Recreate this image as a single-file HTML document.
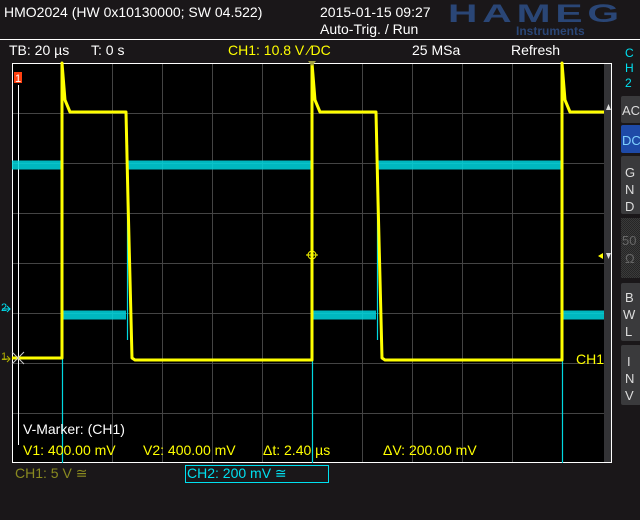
<!DOCTYPE html>
<html><head><meta charset="utf-8"><style>
html,body{margin:0;padding:0;background:#1a1719;width:640px;height:520px;overflow:hidden}
svg{display:block}
text{font-family:"Liberation Sans",sans-serif}
</style></head><body>
<svg width="640" height="520" viewBox="0 0 640 520" xmlns="http://www.w3.org/2000/svg">
<defs>
<pattern id="hatch" width="2" height="2" patternUnits="userSpaceOnUse"><rect width="2" height="2" fill="#3a3a3a"/><rect width="1" height="1" fill="#262626"/><rect x="1" y="1" width="1" height="1" fill="#262626"/></pattern>
</defs>
<rect width="640" height="520" fill="#1a1719"/>
<text x="4" y="17" font-size="14" fill="#fff">HMO2024 (HW 0x10130000; SW 04.522)</text>
<text x="320" y="17" font-size="14" fill="#fff">2015-01-15 09:27</text>
<text x="320" y="34" font-size="14" fill="#fff">Auto-Trig. / Run</text>
<text x="448" y="22" font-size="25" font-weight="bold" fill="#2a4676" letter-spacing="3" textLength="176" lengthAdjust="spacingAndGlyphs">HAMEG</text>
<text x="516" y="35" font-size="12" font-weight="bold" fill="#2a4676">Instruments</text>
<line x1="0" y1="39.5" x2="640" y2="39.5" stroke="#fff" stroke-width="1"/>
<text x="9" y="55" font-size="14" fill="#fff">TB: 20 µs</text>
<text x="91" y="55" font-size="14" fill="#fff">T: 0 s</text>
<text x="228" y="55" font-size="14" fill="#ffff00">CH1: 10.8 V ⁄DC</text>
<text x="412" y="55" font-size="14" fill="#fff">25 MSa</text>
<text x="511" y="55" font-size="14" fill="#fff">Refresh</text>
<text x="625" y="57" font-size="12" fill="#00e0f0">C</text>
<text x="625" y="72" font-size="12" fill="#00e0f0">H</text>
<text x="625" y="87" font-size="12" fill="#00e0f0">2</text>
<rect x="621" y="96" width="20" height="27" rx="2" fill="#3a3a3c"/>
<text x="622" y="115" font-size="13" fill="#ddd">AC</text>
<rect x="621" y="125" width="20" height="28" rx="2" fill="#1e4aa8"/>
<text x="622" y="145" font-size="13" fill="#7fd0ff">DC</text>
<rect x="621" y="156" width="20" height="58" rx="2" fill="#3a3a3c"/>
<text x="625" y="177" font-size="13" fill="#ddd">G</text><text x="625" y="194" font-size="13" fill="#ddd">N</text><text x="625" y="211" font-size="13" fill="#ddd">D</text>
<rect x="621" y="218" width="20" height="60" fill="url(#hatch)"/>
<text x="622" y="245" font-size="13" fill="#666">50</text>
<text x="625" y="263" font-size="13" fill="#666">Ω</text>
<rect x="621" y="283" width="20" height="58" rx="2" fill="#3a3a3c"/>
<text x="625" y="302" font-size="13" fill="#ddd">B</text><text x="623" y="319" font-size="13" fill="#ddd">W</text><text x="625" y="336" font-size="13" fill="#ddd">L</text>
<rect x="621" y="345" width="20" height="60" rx="2" fill="#3a3a3c"/>
<text x="627" y="366" font-size="13" fill="#ddd">I</text><text x="625" y="383" font-size="13" fill="#ddd">N</text><text x="625" y="400" font-size="13" fill="#ddd">V</text>
<rect x="12" y="63" width="600" height="400" fill="#000"/>
<rect x="604" y="63" width="8" height="400" fill="#333336"/>
<g stroke="#444" stroke-width="1">
<line x1="62.5" y1="63" x2="62.5" y2="463"/><line x1="112.5" y1="63" x2="112.5" y2="463"/><line x1="162.5" y1="63" x2="162.5" y2="463"/><line x1="212.5" y1="63" x2="212.5" y2="463"/><line x1="262.5" y1="63" x2="262.5" y2="463"/><line x1="312.5" y1="63" x2="312.5" y2="463"/><line x1="362.5" y1="63" x2="362.5" y2="463"/><line x1="412.5" y1="63" x2="412.5" y2="463"/><line x1="462.5" y1="63" x2="462.5" y2="463"/><line x1="512.5" y1="63" x2="512.5" y2="463"/><line x1="562.5" y1="63" x2="562.5" y2="463"/>
<line x1="12" y1="113.5" x2="604" y2="113.5"/><line x1="12" y1="163.5" x2="604" y2="163.5"/><line x1="12" y1="213.5" x2="604" y2="213.5"/><line x1="12" y1="263.5" x2="604" y2="263.5"/><line x1="12" y1="313.5" x2="604" y2="313.5"/><line x1="12" y1="363.5" x2="604" y2="363.5"/><line x1="12" y1="413.5" x2="604" y2="413.5"/>
</g>
<rect x="12.5" y="63.5" width="599" height="399" fill="none" stroke="#fff" stroke-width="1"/>
<line x1="12.5" y1="80" x2="12.5" y2="463" stroke="#fff" stroke-dasharray="2 2"/>
<line x1="18.5" y1="85" x2="18.5" y2="445" stroke="#fff"/>
<rect x="14" y="72" width="8" height="11" fill="#ff4010"/><text x="15" y="82" font-size="11" fill="#fff">1</text>
<!-- cyan trace -->
<g fill="none" stroke="#00d8e0">
<path d="M12 165 H62 M127 165 H312 M377 165 H562" stroke-width="9" opacity="0.85"/>
<path d="M63 315 H126 M313 315 H376 M563 315 H604" stroke-width="9" opacity="0.85"/>
<path d="M62.5 160 V463 M127.5 145 V340 M312.5 160 V463 M377.5 145 V340 M562.5 160 V463" stroke-width="1.2"/>
</g>
<!-- yellow trace -->
<g fill="none" stroke="#ffff00" stroke-linejoin="round">
<path d="M12 358 H62 V63 L65 100 L70 112 H126 L128 200 L132 358 L135 360 H312 V63 L315 100 L320 112 H376 L378 200 L382 358 L385 360 H562 V63 L565 100 L570 112 H604" stroke-width="3"/>
</g>
<text x="1" y="311" font-size="11" fill="#00e0f0">2</text><path d="M2 309 H10 M7 306 L10 309 L7 312" stroke="#00e0f0" fill="none"/>
<text x="1" y="360" font-size="11" fill="#b0b000">1</text><path d="M2 359 H10 M7 356 L10 359 L7 362" stroke="#b0b000" fill="none"/>
<path d="M12 352 L24 364 M12 364 L24 352" stroke="#ccc"/>
<circle cx="312" cy="255" r="4" fill="none" stroke="#ffff00"/><path d="M306 255 H318 M312 249 V261" stroke="#ffff00"/>
<path d="M308 61 H316 L312 66 Z" fill="#a0a040"/>
<path d="M606 110 L611 110 L608.5 104 Z" fill="#ddd"/>
<path d="M606 253 L611 253 L608.5 259 Z" fill="#ddd"/>
<path d="M598 256 L603 253 V259 Z" fill="#ffff00"/>
<text x="576" y="364" font-size="14" fill="#ffff00">CH1</text>
<text x="23" y="434" font-size="14" fill="#fff">V-Marker: (CH1)</text>
<text x="23" y="455" font-size="14" fill="#ffff00">V1: 400.00 mV</text>
<text x="143" y="455" font-size="14" fill="#ffff00">V2: 400.00 mV</text>
<text x="263" y="455" font-size="14" fill="#ffff00">Δt: 2.40 µs</text>
<text x="383" y="455" font-size="14" fill="#ffff00">ΔV: 200.00 mV</text>
<text x="15" y="478" font-size="14" fill="#8a8a20">CH1: 5 V ≅</text>
<rect x="185.5" y="465.5" width="143" height="17" fill="none" stroke="#00e0f0"/>
<text x="187" y="478" font-size="14" fill="#00e0f0">CH2: 200 mV ≅</text>
</svg>
</body></html>
